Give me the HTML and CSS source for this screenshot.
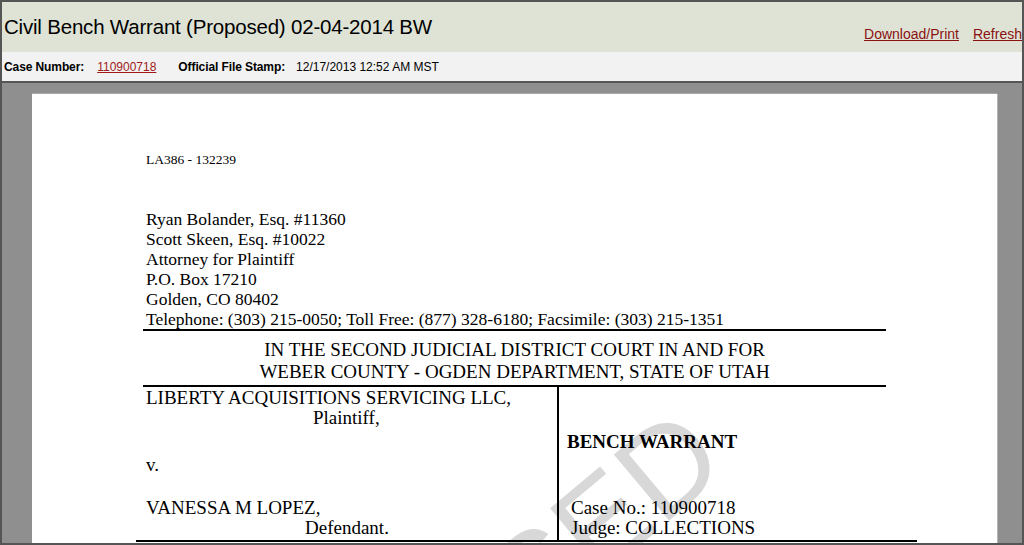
FILE: index.html
```html
<!DOCTYPE html>
<html lang="en">
<head>
<meta charset="utf-8">
<title>Civil Bench Warrant (Proposed)</title>
<link rel="stylesheet" href="styles.css">
</head>
<body>
<div class="app">
  <header class="titlebar">
    <h1 class="doc-title">Civil Bench Warrant (Proposed) 02-04-2014 BW</h1>
    <nav class="actions">
      <a href="#" class="action">Download/Print</a>
      <a href="#" class="action">Refresh</a>
    </nav>
  </header>
  <div class="metabar">
    <span class="meta-label">Case Number:</span>
    <a href="#" class="meta-link">110900718</a>
    <span class="meta-label meta-gap">Official File Stamp:</span>
    <span class="meta-value">12/17/2013 12:52 AM MST</span>
  </div>
  <main class="viewer">
    <div class="page">
      <div class="watermark">PROPOSED</div>
      <div class="doc">
        <p class="docref">LA386 - 132239</p>
        <div class="attorney">
          <p>Ryan Bolander, Esq. #11360</p>
          <p>Scott Skeen, Esq. #10022</p>
          <p>Attorney for Plaintiff</p>
          <p>P.O. Box 17210</p>
          <p>Golden, CO 80402</p>
          <p>Telephone: (303) 215-0050; Toll Free: (877) 328-6180; Facsimile: (303) 215-1351</p>
        </div>
        <div class="court">
          <p>IN THE SECOND JUDICIAL DISTRICT COURT IN AND FOR</p>
          <p>WEBER COUNTY - OGDEN DEPARTMENT, STATE OF UTAH</p>
        </div>
        <div class="caption">
          <div class="parties">
            <p>LIBERTY ACQUISITIONS SERVICING LLC,</p>
            <p class="role role-plaintiff">Plaintiff,</p>
            <p class="versus">v.</p>
            <p class="defendant">VANESSA M LOPEZ,</p>
            <p class="role role-defendant">Defendant.</p>
          </div>
          <div class="casebox">
            <p class="doctype">BENCH WARRANT</p>
            <p class="caseno">Case No.: 110900718</p>
            <p class="judge">Judge: COLLECTIONS</p>
          </div>
        </div>
        <div class="rule-wide"></div>
      </div>
    </div>
  </main>
</div>
</body>
</html>
```

FILE: styles.css
```css
* { box-sizing: border-box; }
html, body { margin: 0; padding: 0; }
body {
  width: 1024px;
  height: 545px;
  overflow: hidden;
  font-family: "Liberation Sans", Arial, Helvetica, sans-serif;
  background: #555;
}
p { margin: 0; }

.app {
  width: 1024px;
  height: 545px;
  border: 2px solid #555;
  display: flex;
  flex-direction: column;
  overflow: hidden;
}

.titlebar {
  height: 50px;
  background: #dee3d6;
  display: flex;
  justify-content: space-between;
  align-items: flex-start;
  padding: 0 0 0 2px;
  flex: none;
}
.doc-title {
  margin: 13px 0 0 0;
  font-size: 20.5px;
  font-weight: normal;
  color: #000;
  line-height: 24px;
  letter-spacing: -0.2px;
}
.actions {
  display: flex;
  gap: 14px;
  margin-top: 24px;
  font-size: 14px;
  line-height: 16px;
}
.action {
  color: #8c1111;
  text-decoration: underline;
}

.metabar {
  flex: none;
  height: 31px;
  background: #f2f2f2;
  display: flex;
  align-items: center;
  padding: 0 0 0 2px;
  font-size: 12px;
  color: #000;
  border-bottom: 2px solid #555;
}
.meta-label { font-weight: bold; letter-spacing: -0.1px; }
.meta-link {
  color: #a11a1a;
  margin-left: 13px;
  text-decoration: underline;
}
.meta-gap { margin-left: 22px; }
.meta-value { margin-left: 11px; }

.viewer {
  flex: 1;
  background: #8f8f8f;
  padding: 11px 25px 0 30px;
  overflow: hidden;
  display: flex;
}
.page {
  position: relative;
  flex: 1;
  background: #fff;
  box-shadow: 1px 0 0 #b4b4b4, 0 -1px 0 #a8a8a8;
  overflow: hidden;
}

.doc {
  position: relative;
  z-index: 1;
  margin-left: 111px;
  width: 743px;
  padding-top: 58px;
  font-family: "Liberation Serif", "Times New Roman", serif;
  color: #000;
}
.docref {
  font-size: 13.5px;
  line-height: 16px;
  padding-left: 3px;
}
.attorney {
  margin-top: 41px;
  font-size: 17.5px;
  line-height: 20px;
  padding-left: 3px;
  border-bottom: 2px solid #000;
}
.court {
  text-align: center;
  font-size: 19px;
  line-height: 22px;
  padding-top: 8px;
  padding-bottom: 2px;
  border-bottom: 2px solid #000;
}
.caption {
  display: grid;
  grid-template-columns: 416px 1fr;
  font-size: 19px;
  line-height: 20px;
}
.parties {
  padding: 1px 0 2px 3px;
  border-right: 2px solid #000;
}
.role-plaintiff { padding-left: 167px; }
.role-defendant { padding-left: 159px; }
.versus { margin-top: 27px; }
.defendant { margin-top: 23px; }
.casebox { padding: 45px 0 0 8px; }
.doctype { font-weight: bold; }
.caseno { margin-top: 46px; padding-left: 4px; }
.judge { padding-left: 4px; }

.rule-wide {
  margin-left: -7px;
  width: 781px;
  height: 2px;
  background: #000;
}

.watermark {
  position: absolute;
  z-index: 0;
  left: 168px;
  top: 720px;
  font-family: "Liberation Sans", Arial, sans-serif;
  font-size: 125px;
  line-height: 1;
  color: #d8d8d8;
  transform: rotate(-40deg);
  transform-origin: left bottom;
  white-space: nowrap;
}
```
